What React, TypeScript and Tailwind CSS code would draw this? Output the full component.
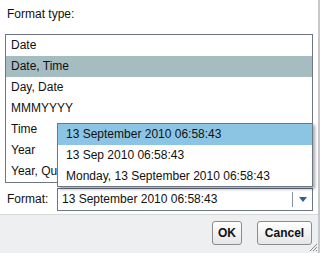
import React from "react";

const types = ["Date", "Date, Time", "Day, Date", "MMMYYYY", "Time", "Year", "Year, Quarter"];
const formats = [
  "13 September 2010 06:58:43",
  "13 Sep 2010 06:58:43",
  "Monday, 13 September 2010 06:58:43",
];

export default function App() {
  return (
    <div
      className="relative w-[320px] h-[253px] overflow-hidden bg-white text-[12px] text-[#111]"
      style={{ fontFamily: '"Liberation Sans", Arial, sans-serif' }}
    >
      <div className="flex flex-col h-full border-r-2 border-[#c6c8cb]">
        {/* top section */}
        <div className="flex flex-col h-[214px] pl-[5px] pr-[5px]">
          <div className="h-[34px] pl-[2px] pt-[7px] leading-[14px]">Format type:</div>
          <div className="w-[308px] h-[149px] border border-[#6d7789] overflow-hidden">
            {types.map((t, i) => (
              <div
                key={t}
                className={
                  "h-[21px] pl-[5px] leading-[21px] whitespace-nowrap " +
                  (i === 1 ? "bg-[#a5bdc1]" : "")
                }
              >
                {t}
              </div>
            ))}
          </div>
          <div className="flex items-center h-[26px] mt-[3px]">
            <div className="w-[52px] pl-[2px]">Format:</div>
            <div className="flex items-center w-[256px] h-[23px] border border-[#6d7789] bg-white">
              <div className="flex-1 pl-[4px] whitespace-nowrap">{formats[0]}</div>
              <div className="w-px h-[15px] bg-[#8a919c]" />
              <div className="w-[19px] flex justify-center">
                <svg width="8" height="5" viewBox="0 0 8 5">
                  <path d="M0 0h8L4 5z" fill="#2f5f8c" />
                </svg>
              </div>
            </div>
          </div>
        </div>
        {/* footer */}
        <div className="flex-1 border-t border-[#d6d8db] bg-[#eeeff1] flex justify-end items-start pt-[6px] pr-[6px] gap-[15px]">
          <button className="w-[30px] h-[24px] rounded-[3px] border border-[#8c8c8c] bg-gradient-to-b from-white to-[#e6e6e6] font-bold text-[12px] leading-[22px] text-[#111]">
            OK
          </button>
          <button className="w-[55px] h-[24px] rounded-[3px] border border-[#8c8c8c] bg-gradient-to-b from-white to-[#e6e6e6] font-bold text-[12px] leading-[22px] text-[#111]">
            Cancel
          </button>
        </div>
      </div>

      {/* dropdown popup */}
      <div className="absolute left-[57px] top-[123px] w-[256px] h-[64px] border border-[#6d7789] bg-white shadow-[2px_2px_3px_rgba(0,0,0,0.35)]">
        {formats.map((f, i) => (
          <div
            key={f}
            className={
              "h-[21px] pl-[8px] leading-[21px] whitespace-nowrap " +
              (i === 0 ? "bg-[#8cc5e3]" : "")
            }
          >
            {f}
          </div>
        ))}
      </div>

      {/* resize grip */}
      <svg className="absolute right-[3px] bottom-[2px]" width="8" height="8" viewBox="0 0 8 8">
        <path d="M8 1L1 8M8 4L4 8M8 7L7 8" stroke="#8a8a8a" strokeWidth="1" />
      </svg>
    </div>
  );
}
